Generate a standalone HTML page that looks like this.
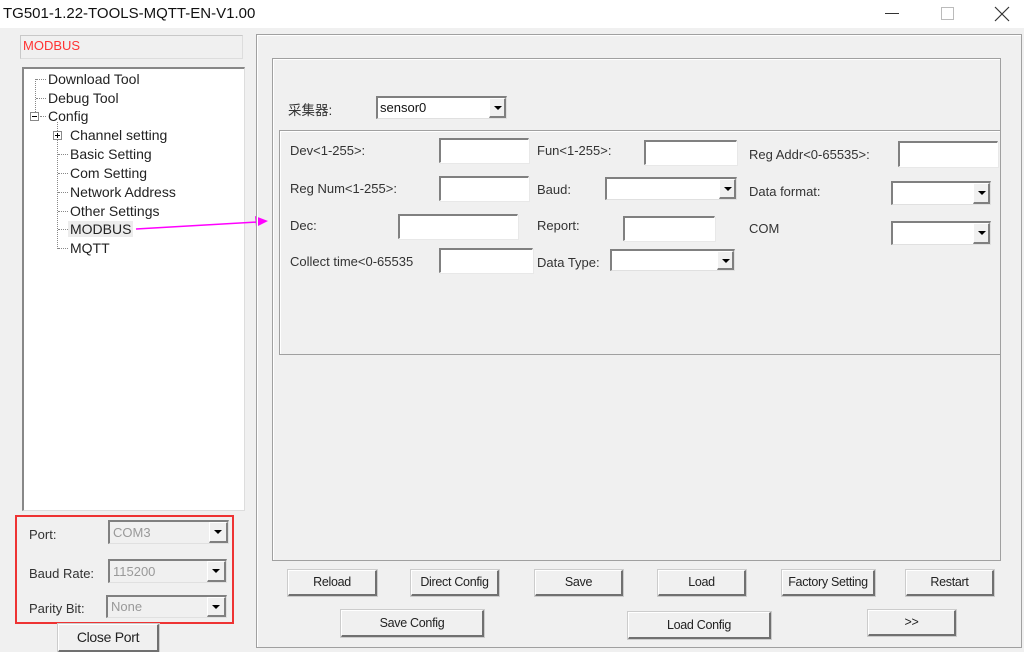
<!DOCTYPE html>
<html><head><meta charset="utf-8"><style>
*{box-sizing:border-box;margin:0;padding:0}
body{width:1024px;height:650px;background:#f0f0f0;font-family:"Liberation Sans","Noto Sans CJK SC",sans-serif;font-size:13px;color:#222;position:relative;overflow:hidden}
.a{position:absolute}
.title{left:0;top:0;width:1024px;height:28px;background:#fff}
.t{white-space:nowrap;font-size:13px;color:#333}
.inp{position:absolute;background:#fff;border:1px solid #fff;border-top:2px solid #808080;border-left:2px solid #808080;box-shadow:1px 1px 0 #e8e8e8}
.sel{position:absolute;background:#fff;border-top:2px solid #808080;border-left:2px solid #808080;border-right:1px solid #e0e0e0;border-bottom:1px solid #e0e0e0}
.sel .ar{position:absolute;right:0;top:0;bottom:0;width:17px;background:#f0f0f0;border-right:2px solid #808080;border-bottom:2px solid #808080;border-top:1px solid #fff;border-left:1px solid #fff}
.sel .ar:after{content:"";position:absolute;left:4px;top:7px;border-left:4px solid transparent;border-right:4px solid transparent;border-top:4px solid #000}
.btn{position:absolute;background:#f0f0f0;border-top:1px solid #fff;border-left:1px solid #fff;border-right:2px solid #707070;border-bottom:2px solid #707070;outline:1px solid #ccc;text-align:center;font-size:12.5px;color:#222;letter-spacing:-0.3px}
.tree div{position:absolute;white-space:nowrap;font-size:14px;color:#222}
.dot{position:absolute;border-top:1px dotted #888}
.vdot{position:absolute;border-left:1px dotted #888}
</style></head><body>
<div class="a title"></div>
<div class="a t" style="left:3px;top:5px;font-size:15px;color:#111">TG501-1.22-TOOLS-MQTT-EN-V1.00</div>
<div class="a" style="left:885px;top:13px;width:14px;border-top:1px solid #333"></div>
<div class="a" style="left:941px;top:7px;width:13px;height:13px;border:1px solid #bbb"></div>
<svg class="a" style="left:994px;top:6px" width="16" height="16"><path d="M1 1L15 15M15 1L1 15" stroke="#333" stroke-width="1.2"/></svg>

<!-- left -->
<div class="a" style="left:20px;top:35px;width:223px;height:24px;border:1px solid #ddd;border-top-color:#c8c8c8;border-left-color:#c8c8c8"></div>
<div class="a t" style="left:23px;top:38px;color:#f33;font-size:13px">MODBUS</div>
<div class="a" style="left:22px;top:67px;width:223px;height:444px;background:#fff;border-top:2px solid #888;border-left:2px solid #888;border-right:1px solid #ddd;border-bottom:1px solid #ddd"></div>
<div class="tree">
<div style="left:48px;top:71px">Download Tool</div>
<div style="left:48px;top:90px">Debug Tool</div>
<div style="left:48px;top:108px">Config</div>
<div style="left:70px;top:127px">Channel setting</div>
<div style="left:70px;top:146px">Basic Setting</div>
<div style="left:70px;top:165px">Com Setting</div>
<div style="left:70px;top:184px">Network Address</div>
<div style="left:70px;top:203px">Other Settings</div>
<div style="left:68px;top:221px;background:#ececec;padding:0 2px">MODBUS</div>
<div style="left:70px;top:240px">MQTT</div>
</div>
<div class="vdot" style="left:35px;top:79px;height:33px"></div>
<div class="dot" style="left:36px;top:79px;width:10px"></div>
<div class="dot" style="left:36px;top:98px;width:10px"></div>
<div class="a" style="left:30px;top:112px;width:9px;height:9px;border:1px solid #888;background:#fff"></div>
<div class="a" style="left:32px;top:116px;width:5px;border-top:1px solid #000"></div>
<div class="dot" style="left:40px;top:116px;width:6px"></div>
<div class="vdot" style="left:57px;top:122px;height:127px"></div>
<div class="a" style="left:53px;top:131px;width:9px;height:9px;border:1px solid #888;background:#fff"></div>
<div class="a" style="left:55px;top:135px;width:5px;border-top:1px solid #000"></div>
<div class="a" style="left:57px;top:133px;height:5px;border-left:1px solid #000"></div>
<div class="dot" style="left:58px;top:154px;width:10px"></div>
<div class="dot" style="left:58px;top:173px;width:10px"></div>
<div class="dot" style="left:58px;top:192px;width:10px"></div>
<div class="dot" style="left:58px;top:211px;width:10px"></div>
<div class="dot" style="left:58px;top:229px;width:10px"></div>
<div class="dot" style="left:58px;top:248px;width:10px"></div>
<svg class="a" style="left:130px;top:212px" width="140" height="22"><path d="M6 17L128 10" stroke="#f0f" stroke-width="1.5"/><path d="M138 9L125 4L126 15Z" fill="#f0f"/></svg>

<div class="a" style="left:15px;top:515px;width:219px;height:109px;border:2px solid #e33"></div>
<div class="a t" style="left:29px;top:527px">Port:</div>
<div class="a t" style="left:29px;top:566px">Baud Rate:</div>
<div class="a t" style="left:29px;top:601px">Parity Bit:</div>
<div class="sel" style="left:108px;top:520px;width:121px;height:24px;background:#f0f0f0"><span class="a t" style="left:3px;top:3px;color:#999">COM3</span><div class="ar" style="width:19px"></div></div>
<div class="sel" style="left:108px;top:559px;width:119px;height:24px;background:#f0f0f0"><span class="a t" style="left:3px;top:3px;color:#999">115200</span><div class="ar" style="width:19px"></div></div>
<div class="sel" style="left:106px;top:595px;width:121px;height:23px;background:#f0f0f0"><span class="a t" style="left:3px;top:2px;color:#999">None</span><div class="ar" style="width:19px"></div></div>
<div class="btn" style="left:58px;top:624px;width:101px;height:28px;line-height:24px;font-size:14px">Close Port</div>

<!-- right -->
<div class="a" style="left:256px;top:34px;width:766px;height:614px;border:1px solid #a0a0a0;box-shadow:inset 1px 1px 0 #fff"></div>
<div class="a" style="left:272px;top:58px;width:729px;height:503px;border:1px solid #a0a0a0;box-shadow:inset 1px 1px 0 #fff"></div>
<div class="a t" style="left:288px;top:99px;font-size:13.5px">采集器:</div>
<div class="sel" style="left:376px;top:96px;width:131px;height:23px"><span class="a t" style="left:2px;top:2px;color:#111">sensor0</span><div class="ar"></div></div>
<div class="a" style="left:279px;top:130px;width:722px;height:225px;border:1px solid #a0a0a0;box-shadow:inset 1px 1px 0 #fff"></div>

<div class="a t" style="left:290px;top:143px">Dev&lt;1-255&gt;:</div>
<div class="inp" style="left:439px;top:138px;width:90px;height:25px"></div>
<div class="a t" style="left:537px;top:143px">Fun&lt;1-255&gt;:</div>
<div class="inp" style="left:644px;top:140px;width:93px;height:25px"></div>
<div class="a t" style="left:749px;top:147px">Reg Addr&lt;0-65535&gt;:</div>
<div class="inp" style="left:898px;top:141px;width:100px;height:26px"></div>

<div class="a t" style="left:290px;top:181px">Reg Num&lt;1-255&gt;:</div>
<div class="inp" style="left:439px;top:176px;width:90px;height:25px"></div>
<div class="a t" style="left:537px;top:182px">Baud:</div>
<div class="sel" style="left:605px;top:177px;width:132px;height:23px"><div class="ar"></div></div>
<div class="a t" style="left:749px;top:184px">Data format:</div>
<div class="sel" style="left:891px;top:181px;width:100px;height:24px"><div class="ar"></div></div>

<div class="a t" style="left:290px;top:218px">Dec:</div>
<div class="inp" style="left:398px;top:214px;width:120px;height:25px"></div>
<div class="a t" style="left:537px;top:218px">Report:</div>
<div class="inp" style="left:623px;top:216px;width:92px;height:25px"></div>
<div class="a t" style="left:749px;top:221px">COM</div>
<div class="sel" style="left:891px;top:221px;width:100px;height:24px"><div class="ar"></div></div>

<div class="a t" style="left:290px;top:254px">Collect time&lt;0-65535</div>
<div class="inp" style="left:439px;top:248px;width:94px;height:25px"></div>
<div class="a t" style="left:537px;top:255px">Data Type:</div>
<div class="sel" style="left:610px;top:249px;width:125px;height:22px"><div class="ar"></div></div>

<div class="btn" style="left:288px;top:570px;width:89px;height:26px;line-height:23px">Reload</div>
<div class="btn" style="left:411px;top:570px;width:88px;height:26px;line-height:23px">Direct Config</div>
<div class="btn" style="left:535px;top:570px;width:88px;height:26px;line-height:23px">Save</div>
<div class="btn" style="left:658px;top:570px;width:88px;height:26px;line-height:23px">Load</div>
<div class="btn" style="left:782px;top:570px;width:93px;height:26px;line-height:23px">Factory Setting</div>
<div class="btn" style="left:906px;top:570px;width:88px;height:26px;line-height:23px">Restart</div>
<div class="btn" style="left:341px;top:610px;width:143px;height:27px;line-height:24px">Save Config</div>
<div class="btn" style="left:628px;top:612px;width:143px;height:27px;line-height:24px">Load Config</div>
<div class="btn" style="left:868px;top:610px;width:88px;height:26px;line-height:23px">&gt;&gt;</div>
</body></html>
